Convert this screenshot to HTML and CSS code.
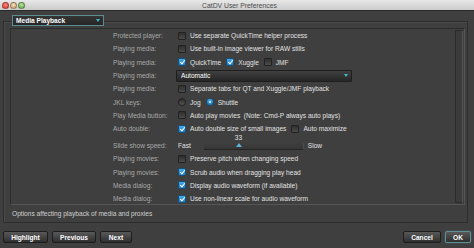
FILE: index.html
```html
<!DOCTYPE html>
<html lang="en">
  <head>
    <meta charset="UTF-8" />
    <title>CatDV User Preferences</title>
    <link rel="stylesheet" href="styles.css">
  </head>
  <body>
    <div class="window">
      <div class="titlebar">
        <div class="lights">
          <span class="light red"></span>
          <span class="light yellow"></span>
          <span class="light green"></span>
        </div>
        <div class="title">CatDV User Preferences</div>
      </div>

      <div class="content">
        <div class="prefs">
          <div class="section-select">Media Playback<span class="arrow"></span></div>

          <div class="pane">
            <div class="rows">
              <div class="row">
                <span class="label">Protected player:</span>
                <span class="check"></span><span class="opt">Use separate QuickTime helper process</span>
              </div>
              <div class="row">
                <span class="label">Playing media:</span>
                <span class="check"></span><span class="opt">Use built-in image viewer for RAW stills</span>
              </div>
              <div class="row">
                <span class="label">Playing media:</span>
                <span class="check on"></span><span class="opt">QuickTime</span>
                <span class="check on"></span><span class="opt">Xuggle</span>
                <span class="check"></span><span class="opt">JMF</span>
              </div>
              <div class="row">
                <span class="label">Playing media:</span>
                <div class="combo">Automatic<span class="arrow"></span></div>
              </div>
              <div class="row">
                <span class="label">Playing media:</span>
                <span class="check"></span><span class="opt">Separate tabs for QT and Xuggle/JMF playback</span>
              </div>
              <div class="row">
                <span class="label">JKL keys:</span>
                <span class="radio"></span><span class="opt">Jog</span>
                <span class="radio on"></span><span class="opt">Shuttle</span>
              </div>
              <div class="row">
                <span class="label">Play Media button:</span>
                <span class="check"></span><span class="opt">Auto play movies&nbsp; (Note: Cmd-P always auto plays)</span>
              </div>
              <div class="row">
                <span class="label">Auto double:</span>
                <span class="check on"></span><span class="opt">Auto double size of small images</span>
                <span class="check"></span><span class="opt">Auto maximize</span>
              </div>
              <div class="row slider-row">
                <span class="label">Slide show speed:</span>
                <span class="opt">Fast</span>
                <div class="slider">
                  <span class="slider-value">33</span>
                  <span class="thumb"></span>
                </div>
                <span class="opt">Slow</span>
              </div>
              <div class="row">
                <span class="label">Playing movies:</span>
                <span class="check"></span><span class="opt">Preserve pitch when changing speed</span>
              </div>
              <div class="row">
                <span class="label">Playing movies:</span>
                <span class="check on"></span><span class="opt">Scrub audio when dragging play head</span>
              </div>
              <div class="row">
                <span class="label">Media dialog:</span>
                <span class="check on"></span><span class="opt">Display audio waveform (if available)</span>
              </div>
              <div class="row">
                <span class="label">Media dialog:</span>
                <span class="check on"></span><span class="opt">Use non-linear scale for audio waveform</span>
              </div>
            </div>
            <div class="scrollbar"></div>
          </div>

          <div class="hint">Options affecting playback of media and proxies</div>
        </div>

        <div class="buttons">
          <button class="btn btn-highlight">Highlight</button>
          <button class="btn btn-prev">Previous</button>
          <button class="btn btn-next">Next</button>
          <span class="spacer"></span>
          <button class="btn btn-cancel">Cancel</button>
          <button class="btn btn-ok">OK</button>
        </div>
      </div>
    </div>
  </body>
</html>
```

FILE: styles.css
```css
body {
  margin: 0;
  padding: 0;
  font-family: "Liberation Sans", Arial, sans-serif;
  font-size: 6.6px;
  background-color: #3f3f3f;
}
.window {
  width: 474px;
  height: 248px;
  background-color: #3f3f3f;
  overflow: hidden;
}
.titlebar {
  height: 10px;
  border-bottom: 1px solid #2a2a2a;
  background: linear-gradient(#e8e8e8, #cbcbcb);
  display: flex;
  align-items: center;
  position: relative;
}
.lights {
  display: flex;
  gap: 1px;
  padding-left: 2px;
}
.light {
  width: 5px;
  height: 5px;
  border-radius: 50%;
  border: 0.5px solid rgba(0, 0, 0, 0.3);
}
.light.red {
  background: radial-gradient(circle at 50% 35%, #ff8a80, #d8372c);
}
.light.yellow {
  background: radial-gradient(circle at 50% 35%, #f7e0b8, #c79a6c);
}
.light.green {
  background: radial-gradient(circle at 50% 35%, #b9e8a0, #5fa64a);
}
.title {
  flex: 1;
  text-align: center;
  color: #4b4b4b;
  font-size: 6.8px;
  margin-right: 20px;
}
.content {
  padding: 10px 0 0 3px;
}
.prefs {
  width: 465px;
  height: 202px;
  box-sizing: border-box;
  border: 1px solid #2d2d2d;
  box-shadow: inset 1px 1px 0 #4a4a4a;
  display: flex;
  flex-direction: column;
}
.section-select {
  width: 92px;
  height: 11px;
  box-sizing: border-box;
  margin: -7px 0 0 8px;
  padding-left: 3px;
  background: linear-gradient(#353535, #262626);
  border: 1px solid #5d8c92;
  color: #ffffff;
  font-weight: bold;
  display: flex;
  align-items: center;
  justify-content: space-between;
}
.arrow {
  width: 0;
  height: 0;
  margin-right: 3px;
  border-left: 2.5px solid transparent;
  border-right: 2.5px solid transparent;
  border-top: 3px solid #3fb8c5;
}
.pane {
  margin: 2px 2px 0 6px;
  height: 177px;
  box-sizing: border-box;
  border: 1px solid #2c2c2c;
  border-right-color: #555;
  border-bottom-color: #555;
  display: flex;
}
.rows {
  flex: 1;
  padding: 0 0 0 102px;
}
.row {
  height: 13.3px;
  display: flex;
  align-items: center;
}
.label {
  width: 65px;
  color: #a9a9a9;
}
.opt {
  color: #e2e2e2;
  margin-right: 5px;
}
.check {
  width: 6px;
  height: 6px;
  border: 1px solid #222;
  border-radius: 1px;
  background: linear-gradient(#2e2e2e, #4b4b4b);
  margin-right: 4px;
  position: relative;
}
.check.on {
  border-color: #14507a;
  background: linear-gradient(#4aa8e6, #1d7cc2);
}
.check.on::after {
  content: "";
  position: absolute;
  left: 1.5px;
  top: 0;
  width: 2px;
  height: 4px;
  border-right: 1px solid #fff;
  border-bottom: 1px solid #fff;
  transform: rotate(40deg);
}
.radio {
  width: 6px;
  height: 6px;
  border-radius: 50%;
  border: 1px solid #222;
  background: linear-gradient(#2e2e2e, #555);
  margin-right: 4px;
  position: relative;
}
.radio.on {
  border-color: #14507a;
  background: linear-gradient(#4aa8e6, #1d7cc2);
}
.radio.on::after {
  content: "";
  position: absolute;
  left: 2px;
  top: 2px;
  width: 2px;
  height: 2px;
  border-radius: 50%;
  background: #fff;
}
.combo {
  width: 176px;
  height: 12px;
  box-sizing: border-box;
  margin-left: -2px;
  padding-left: 4px;
  border: 1px solid #1e1e1e;
  border-radius: 1px;
  background: linear-gradient(#404040, #262626);
  color: #ffffff;
  display: flex;
  align-items: center;
  justify-content: space-between;
}
.slider-row {
  height: 16.8px;
  padding-top: 3px;
  box-sizing: border-box;
}
.slider {
  width: 100px;
  height: 7px;
  margin: 2px 4px 0 8px;
  box-sizing: border-box;
  border-bottom: 1px solid #262626;
  border-right: 1px solid #4c4c4c;
  background: linear-gradient(#3f3f3f, #363636);
  position: relative;
}
.slider-value {
  position: absolute;
  left: 31px;
  top: -9px;
  color: #e2e2e2;
}
.thumb {
  position: absolute;
  left: 32px;
  top: 0;
  width: 0;
  height: 0;
  border-left: 3px solid transparent;
  border-right: 3px solid transparent;
  border-bottom: 4px solid #5fb2da;
}
.scrollbar {
  width: 8px;
  margin: 1px 1px 1px 0;
  box-sizing: border-box;
  border: 1px solid #2b2b2b;
  border-right-color: #555;
  background: #3b3b3b;
}
.hint {
  flex: 1;
  display: flex;
  align-items: center;
  padding-left: 8px;
  color: #cfcfcf;
}
.buttons {
  display: flex;
  gap: 4px;
  width: 468px;
  margin-top: 8px;
}
.spacer {
  flex: 1;
}
.btn {
  height: 12px;
  padding: 0;
  border: 1px solid #1e1e1e;
  border-radius: 2px;
  background: linear-gradient(#595959, #2f2f2f);
  color: #ffffff;
  font-family: "Liberation Sans", Arial, sans-serif;
  font-size: 6.6px;
  font-weight: bold;
  cursor: pointer;
}
.btn-highlight {
  width: 45px;
}
.btn-prev {
  width: 44px;
}
.btn-next {
  width: 32px;
}
.btn-cancel {
  width: 38px;
}
.btn-ok {
  width: 26px;
  border-color: #5d8f98;
  box-shadow: 0 0 1px #6fb7c6;
}
```
